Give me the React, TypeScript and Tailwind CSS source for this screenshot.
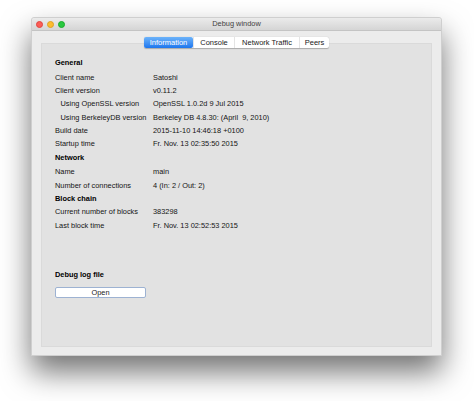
import React from "react"

type Row = { label: string; value?: string; header?: boolean; indent?: boolean; gap?: boolean }

const rows: Row[] = [
    { label: "General", header: true, gap: true },
    { label: "Client name", value: "Satoshi" },
    { label: "Client version", value: "v0.11.2" },
    { label: "Using OpenSSL version", value: "OpenSSL 1.0.2d 9 Jul 2015", indent: true },
    { label: "Using BerkeleyDB version", value: "Berkeley DB 4.8.30: (April  9, 2010)", indent: true },
    { label: "Build date", value: "2015-11-10 14:46:18 +0100" },
    { label: "Startup time", value: "Fr. Nov. 13 02:35:50 2015" },
    { label: "Network", header: true, gap: true },
    { label: "Name", value: "main" },
    { label: "Number of connections", value: "4 (In: 2 / Out: 2)" },
    { label: "Block chain", header: true },
    { label: "Current number of blocks", value: "383298" },
    { label: "Last block time", value: "Fr. Nov. 13 02:52:53 2015" },
]

const tabs = [
    { name: "Information", w: "w-[49px]", active: true },
    { name: "Console", w: "w-[41px]" },
    { name: "Network Traffic", w: "w-[65px]" },
    { name: "Peers", w: "w-[30px]" },
]

// window chrome buttons
const TrafficLights = () => (
    <div className="flex items-center gap-[4px] pl-[4px]">
        <span className="h-[7px] w-[7px] rounded-full bg-[#fc5d57] border border-[#e0443e]" />
        <span className="h-[7px] w-[7px] rounded-full bg-[#fdbc2e] border border-[#dea123]" />
        <span className="h-[7px] w-[7px] rounded-full bg-[#29c840] border border-[#1aab29]" />
    </div>
)

export default function App() {
    return (
        <div
            className="w-[474px] h-[401px] bg-white pl-[31px] pt-[17px] overflow-hidden"
            style={{ fontFamily: '"Liberation Sans", Arial, sans-serif' }}
        >
            <div className="w-[411px] h-[339px] bg-[#ececec] flex flex-col shadow-[0_16px_30px_rgba(0,0,0,0.55)] border border-[#cfcfcf] rounded-t-[3px]">
                {/* title bar */}
                <div className="relative h-[13px] flex items-center bg-gradient-to-b from-[#ebebeb] to-[#d5d5d5] border-b border-[#c4c4c4] rounded-t-[3px]">
                    <TrafficLights />
                    <div className="absolute inset-0 flex items-center justify-center text-[7.4px] text-[#3f3f3f]">
                        Debug window
                    </div>
                </div>

                {/* tabs */}
                <div className="flex justify-center mt-[6px] relative z-10">
                    <div className="flex h-[11px] bg-white rounded-[2px] shadow-[0_0.5px_1px_rgba(0,0,0,0.25)] text-[7.5px] text-[#1a1a1a]">
                        {tabs.map((t) => (
                            <div
                                key={t.name}
                                className={
                                    t.active
                                        ? `${t.w} flex items-center justify-center rounded-[2px] text-white bg-gradient-to-b from-[#6cb3fa] to-[#1b76ee]`
                                        : `${t.w} flex items-center justify-center border-l border-[#e4e4e4]`
                                }
                            >
                                {t.name}
                            </div>
                        ))}
                    </div>
                </div>

                {/* panel */}
                <div className="mx-[9px] -mt-[5px] h-[304px] bg-[#e2e2e2] border border-[#dadada] pl-[13px] pt-[12px] text-[7.4px] text-[#141414]">
                    {rows.map((r) => (
                        <div key={r.label} className={`flex items-center h-[13.4px] ${r.gap ? "mb-[1px]" : ""}`}>
                            <div className={`w-[98px] ${r.indent ? "pl-[5.5px]" : ""} ${r.header ? "font-bold text-black" : ""}`}>
                                {r.label}
                            </div>
                            {r.value && <div className="whitespace-pre">{r.value}</div>}
                        </div>
                    ))}

                    <div className="mt-[36px] h-[13.4px] flex items-center font-bold text-black">Debug log file</div>
                    <button className="mt-[5.5px] w-[91px] h-[11px] flex items-center justify-center bg-white border border-[#9db2d2] rounded-[2px] text-[7.4px] text-[#1a1a1a] leading-none">
                        Open
                    </button>
                </div>
            </div>
        </div>
    )
}
